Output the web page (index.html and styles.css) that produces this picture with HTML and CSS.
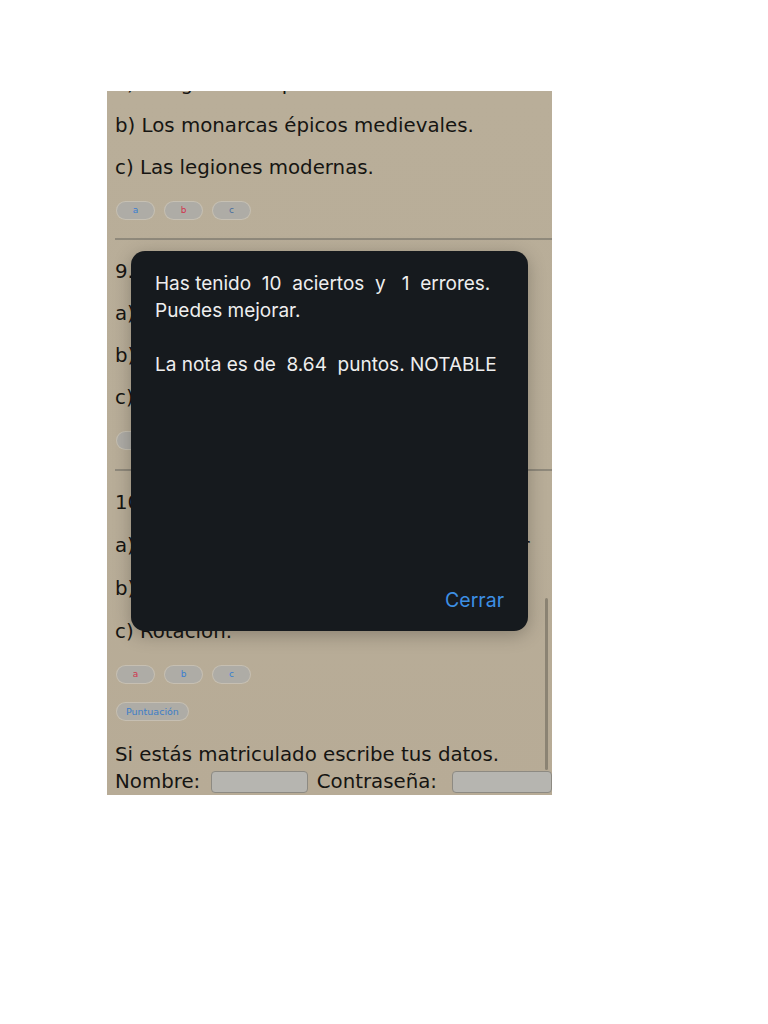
FILE: index.html
```html
<!DOCTYPE html>
<html lang="es">
<head>
<meta charset="utf-8">
<title>Cuestionario</title>
<link rel="stylesheet" href="styles.css">
</head>
<body>
<div class="screen">
  <div class="content">
    <section class="q">
      <div class="line">a) Los guerreros primitivos.</div>
      <div class="line">b) Los monarcas épicos medievales.</div>
      <div class="line">c) Las legiones modernas.</div>
      <div class="btns"><span class="opt blue">a</span><span class="opt red">b</span><span class="opt slate">c</span></div>
    </section>
    <hr class="sep first">
    <section class="q">
      <div class="line">9. ¿Qué produce las estaciones?</div>
      <div class="line">a) El movimiento de la Luna.</div>
      <div class="line">b) La inclinación del eje.</div>
      <div class="line">c) La distancia al Sol.</div>
      <div class="btns"><span class="opt blue">a</span><span class="opt red">b</span><span class="opt slate">c</span></div>
    </section>
    <hr class="sep second">
    <section class="q q10">
      <div class="line">10. ¿Cómo se llama el giro de la Tierra?</div>
      <div class="line">a) Traslación alrededor de la estrella solar</div>
      <div class="line">b) Precesión.</div>
      <div class="line">c) Rotación.</div>
      <div class="btns"><span class="opt red">a</span><span class="opt blue">b</span><span class="opt blue">c</span></div>
    </section>
    <div class="score-row"><span class="score">Puntuación</span></div>
    <div class="login">
      <div class="login-line">Si estás matriculado escribe tus datos.</div>
      <div class="login-line fields">Nombre: <span class="field name"></span> Contraseña: <span class="field pass"></span></div>
    </div>
  </div>
  <div class="scrollbar"></div>
  <div class="dialog">
    <div class="msg">
      <div class="msg-line">Has tenido  10  aciertos  y   1  errores.</div>
      <div class="msg-line">Puedes mejorar.</div>
      <div class="msg-line">&nbsp;</div>
      <div class="msg-line">La nota es de  8.64  puntos. NOTABLE</div>
    </div>
    <div class="actions"><span class="close">Cerrar</span></div>
  </div>
</div>
</body>
</html>
```

FILE: styles.css
```css
html, body {
  margin: 0;
  padding: 0;
  background: #ffffff;
}

.screen {
  position: relative;
  margin: 91px 0 0 107px;
  width: 445px;
  height: 704px;
  overflow: hidden;
  background: linear-gradient(180deg, #b9ae99 0%, #b8ad98 60%, #b7ab96 100%);
  color: #161512;
  font-family: "DejaVu Sans", Verdana, sans-serif;
}

.content {
  margin-top: -28px;
  padding-left: 8px;
}

.line {
  height: 42px;
  line-height: 42px;
  font-size: 19.8px;
  white-space: nowrap;
}

.q10 .line,
.q10 .btns {
  height: 43px;
  line-height: 43px;
}

.btns {
  height: 42px;
  display: flex;
  align-items: center;
  gap: 11px;
  padding-left: 2px;
}

.opt {
  width: 37px;
  height: 17px;
  border-radius: 9px;
  background: #aeaca6;
  box-shadow: 0 0 0 1px rgba(204, 200, 190, 0.7);
  display: flex;
  align-items: center;
  justify-content: center;
  font-size: 9px;
  line-height: 1;
}

.blue { color: #3a7ed0; }
.red { color: #d0344f; }
.slate { color: #4a6c9e; }

.sep {
  border: 0;
  border-top: 2px solid #8f897b;
  margin: 0;
}

.sep.first {
  margin: 7px 0 11px 0;
}

.sep.second {
  margin: 8px 0 10px 0;
}

.score-row {
  padding-top: 4px;
  padding-left: 2px;
  height: 17px;
}

.score {
  display: inline-flex;
  align-items: center;
  height: 17px;
  padding: 0 9px;
  border-radius: 9px;
  background: #aeaca6;
  box-shadow: 0 0 0 1px rgba(204, 200, 190, 0.7);
  color: #3d7dc7;
  font-size: 9.5px;
}

.login {
  margin-top: 24px;
}

.login-line {
  height: 27px;
  line-height: 27px;
  font-size: 19.8px;
  white-space: nowrap;
}

.fields {
  display: flex;
  align-items: center;
  gap: 9px;
}

.field {
  display: inline-block;
  height: 20px;
  border: 1px solid #8d8a82;
  border-radius: 4px;
  background: #b6b5b0;
}

.field.name { width: 106px; margin-left: 2px; }
.field.pass { width: 110px; margin-left: 6px; }

.scrollbar {
  position: absolute;
  left: 438px;
  top: 507px;
  width: 3px;
  height: 172px;
  border-radius: 2px;
  background: #8b8373;
}

.dialog {
  position: absolute;
  left: 24px;
  top: 160px;
  width: 397px;
  height: 380px;
  box-sizing: border-box;
  padding: 19px 24px 18px 24px;
  border-radius: 14px;
  background: #161a1e;
  box-shadow: 0 4px 18px rgba(0, 0, 0, 0.25);
  display: flex;
  flex-direction: column;
  justify-content: space-between;
  font-family: Inter, "Noto Sans", sans-serif;
}

.msg-line {
  height: 27px;
  line-height: 27px;
  font-size: 19px;
  color: #eeeeee;
  white-space: pre;
}

.actions {
  display: flex;
  justify-content: flex-end;
}

.close {
  line-height: 26px;
  font-size: 19.5px;
  color: #3d8fe4;
}
```
